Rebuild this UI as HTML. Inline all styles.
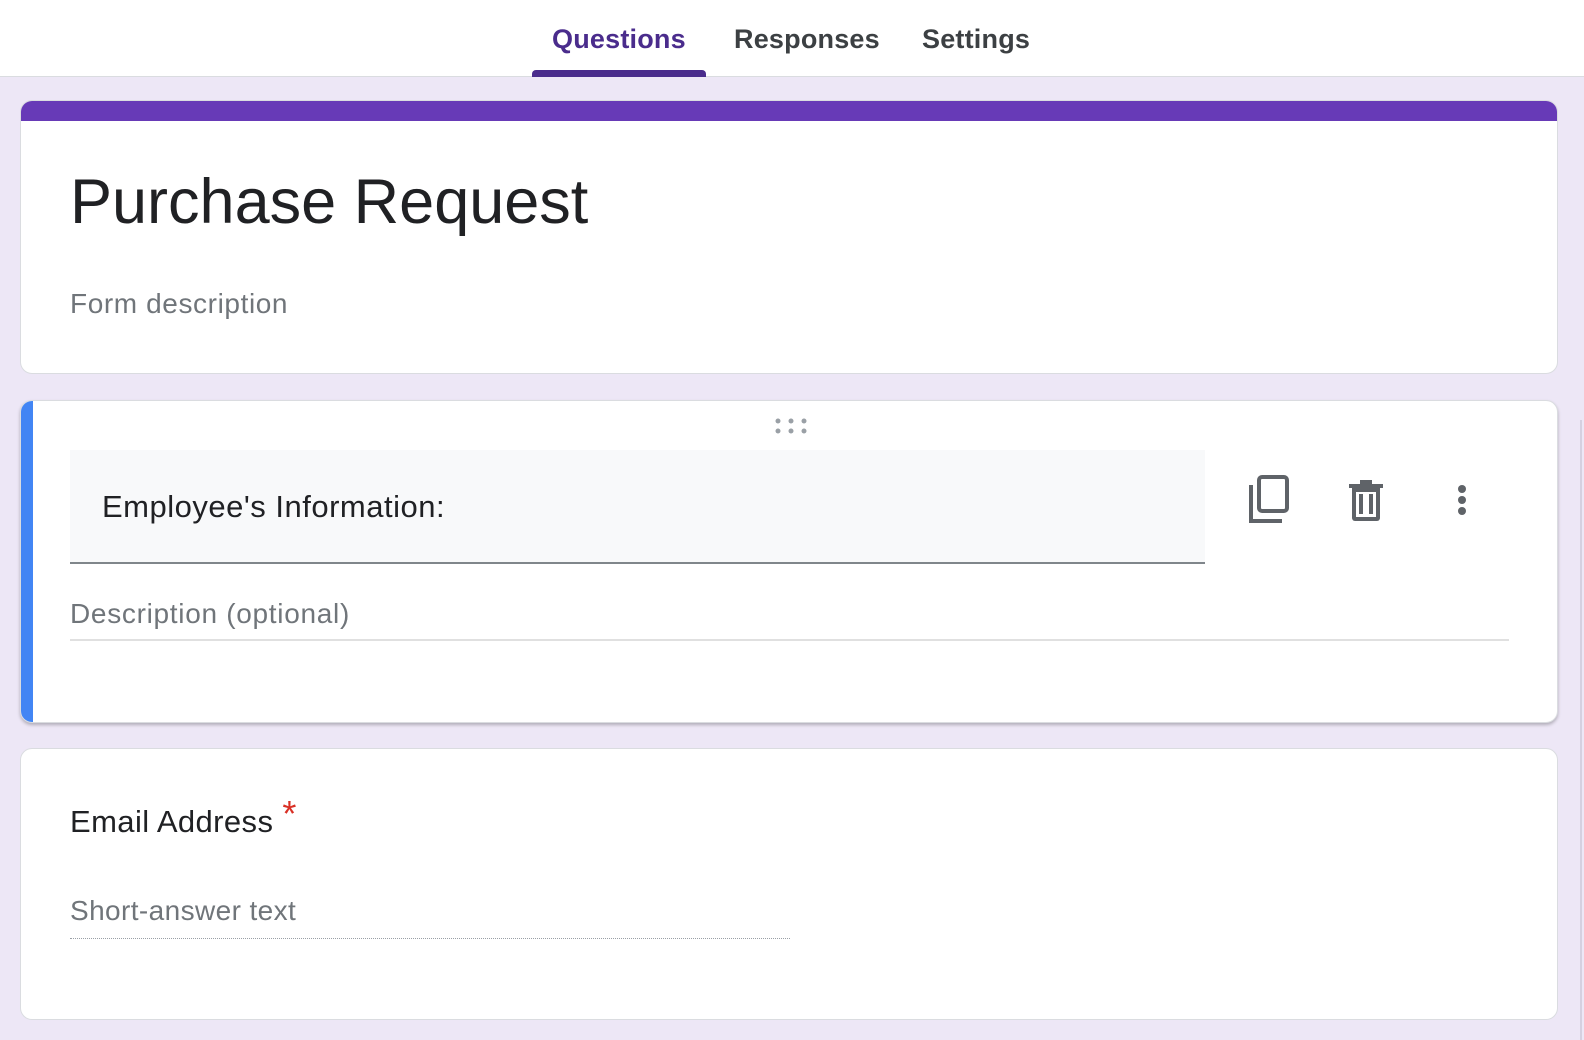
<!DOCTYPE html>
<html><head><style>
*{margin:0;padding:0;box-sizing:border-box}
body{width:1584px;height:1040px;background:#ede7f6;font-family:"Liberation Sans",Arial,sans-serif;position:relative;overflow:hidden}
.abs{position:absolute}
.hdr{left:0;top:0;width:1584px;height:77px;background:#fff;border-bottom:1px solid #dadce0}
.tab{top:24px;font-size:27px;color:#3c4043;white-space:nowrap;letter-spacing:0.2px;font-weight:bold}
.card{background:#fff;border-radius:12px;border:1px solid #dadce0;left:20px;width:1538px}
.grey{color:#70757a}
</style></head><body>
<div class="abs hdr"></div>
<div class="abs tab" style="left:552px;color:#4a2c8c">Questions</div>
<div class="abs tab" style="left:734px">Responses</div>
<div class="abs tab" style="left:922px">Settings</div>
<div class="abs" style="left:532px;top:70px;width:174px;height:7px;background:#4a2c8c;border-radius:4px 4px 0 0"></div>

<div class="abs card" style="top:100px;height:274px;overflow:hidden">
  <div style="height:20px;background:#673ab7"></div>
</div>
<div class="abs" style="left:70px;top:166px;font-size:63px;color:#202124;white-space:nowrap">Purchase Request</div>
<div class="abs grey" style="left:70px;top:288px;font-size:28px;letter-spacing:0.6px">Form description</div>

<div class="abs card" style="top:400px;height:323px;overflow:hidden;box-shadow:0 2px 3px rgba(0,0,0,.25)">
  <div style="position:absolute;left:0;top:0;width:12px;height:100%;background:#4285f4"></div>
</div>
<svg class="abs" style="left:775px;top:418px" width="32" height="16"><g fill="#9aa0a6"><circle cx="3" cy="3" r="2.5"/><circle cx="16" cy="3" r="2.5"/><circle cx="29" cy="3" r="2.5"/><circle cx="3" cy="13" r="2.5"/><circle cx="16" cy="13" r="2.5"/><circle cx="29" cy="13" r="2.5"/></g></svg>
<div class="abs" style="left:70px;top:450px;width:1135px;height:114px;background:#f8f9fa;border-bottom:2px solid #80868b"></div>
<div class="abs" style="left:102px;top:489px;font-size:31px;color:#202124;letter-spacing:0.5px">Employee's Information:</div>
<div class="abs grey" style="left:70px;top:598px;font-size:28px;letter-spacing:0.7px">Description (optional)</div>
<div class="abs" style="left:70px;top:639px;width:1439px;height:2px;background:#e0e0e0"></div>

<svg class="abs" style="left:1249px;top:475px" width="40" height="50" viewBox="0 0 40 50"><g fill="none" stroke="#5f6368" stroke-width="4"><path d="M2 10V46H33"/><rect x="10" y="2" width="28" height="34" rx="3"/></g></svg>
<svg class="abs" style="left:1349px;top:480px" width="34" height="42" viewBox="0 0 34 42"><g fill="#5f6368"><rect x="0" y="4" width="34" height="4"/><rect x="11" y="0" width="12" height="5"/><path d="M3 8H31V38a3 3 0 0 1-3 3H6a3 3 0 0 1-3-3Z"/></g><g fill="#fff"><rect x="7" y="12" width="20" height="25"/></g><g fill="#5f6368"><rect x="10" y="14" width="4" height="20"/><rect x="20" y="14" width="4" height="20"/></g></svg>
<svg class="abs" style="left:1455px;top:484px" width="14" height="38"><g fill="#5f6368"><circle cx="7" cy="5" r="4"/><circle cx="7" cy="16" r="4"/><circle cx="7" cy="27" r="4"/></g></svg>

<div class="abs card" style="top:748px;height:272px"></div>
<div class="abs" style="left:70px;top:799px;font-size:31px;color:#202124;letter-spacing:0.4px">Email Address <span style="color:#d93025;position:relative;top:-6px;font-size:36px">*</span></div>
<div class="abs grey" style="left:70px;top:895px;font-size:28px;letter-spacing:0.4px">Short-answer text</div>
<div class="abs" style="left:70px;top:938px;width:720px;border-top:1.5px dotted #9aa0a6"></div>

<div class="abs" style="left:1580px;top:420px;width:2px;height:620px;background:#d5d0e0"></div>
</body></html>
